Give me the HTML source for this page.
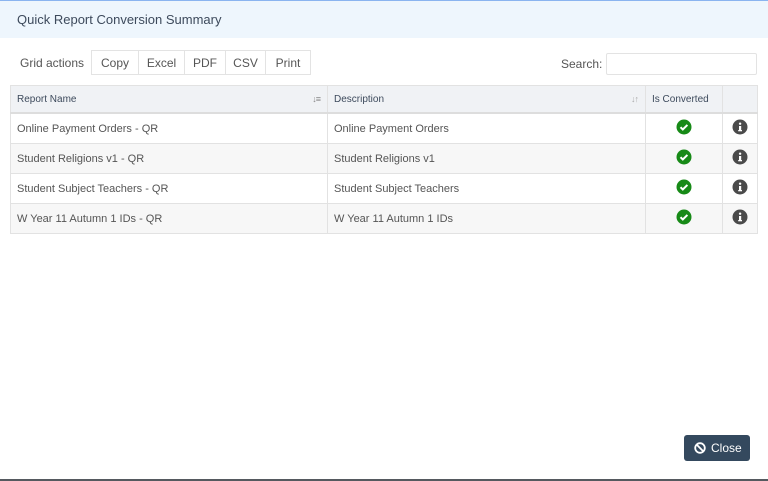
<!DOCTYPE html><html><head><style>
body{margin:0;width:768px;height:481px;background:#fff;font-family:"Liberation Sans",sans-serif;position:relative;overflow:hidden;color:#555}
.hd{position:absolute;left:0;top:0;width:768px;height:38px;background:#eef6fd;border-top:1px solid #8ab4f0;box-sizing:border-box}
.hd span{position:absolute;left:17px;top:11px;font-size:13px;color:#3d4a5c}
.ga{position:absolute;left:20px;top:56px;font-size:12px;color:#555}
.btns{position:absolute;left:91px;top:50px;height:25px;display:flex;border:1px solid #e3e3e3;box-sizing:border-box}
.btns div{border-right:1px solid #e3e3e3;font-size:12px;color:#555;line-height:25px;text-align:center;box-sizing:border-box}
.btns div:last-child{border-right:none}
.sl{position:absolute;left:561px;top:57px;font-size:12px;color:#555}
.si{position:absolute;left:606px;top:53px;width:151px;height:22px;border:1px solid #e3e3e3;box-sizing:border-box;border-radius:2px}
table{position:absolute;left:10px;top:85px;width:747px;border-collapse:collapse;font-size:11px;table-layout:fixed}
td,th{border:1px solid #e2e2e2;padding:0 6px;text-align:left;color:#555;font-weight:normal}
th{height:25px;background:#f0f2f5;font-size:10px;color:#3d4a5c;border-bottom:2px solid #ddd;position:relative;padding-top:1px}
td{height:29px}
tr.s td{background:#f7f7f7}
.ar{position:absolute;right:7px;top:8px;font-size:9px;color:#aaa;letter-spacing:-1px}
.c{text-align:center}
.close{position:absolute;left:684px;top:435px;width:66px;height:26px;background:#34495e;border-radius:3px;color:#fff;font-size:12px;line-height:26px}
.bl{position:absolute;left:0;top:479px;width:768px;height:2px;background:#55595f}
</style></head><body>
<div class="hd"><span>Quick Report Conversion Summary</span></div>
<div class="ga">Grid actions</div>
<div class="btns"><div style="width:47px">Copy</div><div style="width:46px">Excel</div><div style="width:41px">PDF</div><div style="width:40px">CSV</div><div style="width:44px">Print</div></div>
<div class="sl">Search:</div><div class="si"></div>
<table>
<colgroup><col style="width:317px"><col style="width:318px"><col style="width:77px"><col style="width:35px"></colgroup>
<tr><th>Report Name<span class="ar" style="color:#888">↓≡</span></th><th>Description<span class="ar">↓↑</span></th><th>Is Converted</th><th></th></tr>
<tr><td>Online Payment Orders - QR</td><td>Online Payment Orders</td><td class="c"><svg width="16" height="16" viewBox="0 0 16 16"><circle cx="8" cy="8" r="7.5" fill="#178a17"/><path d="M4.5 8.2l2.3 2.3 4.6-4.6" stroke="#fff" stroke-width="2" fill="none"/></svg></td><td class="c"><svg width="16" height="16" viewBox="0 0 16 16"><circle cx="8" cy="8" r="7.5" fill="#4a4a4a"/><rect x="7" y="7" width="2.2" height="5" fill="#fff"/><rect x="6.2" y="11" width="3.8" height="1.3" fill="#fff"/><circle cx="8.1" cy="4.7" r="1.2" fill="#fff"/></svg></td></tr>
<tr class="s"><td>Student Religions v1 - QR</td><td>Student Religions v1</td><td class="c"><svg width="16" height="16" viewBox="0 0 16 16"><circle cx="8" cy="8" r="7.5" fill="#178a17"/><path d="M4.5 8.2l2.3 2.3 4.6-4.6" stroke="#fff" stroke-width="2" fill="none"/></svg></td><td class="c"><svg width="16" height="16" viewBox="0 0 16 16"><circle cx="8" cy="8" r="7.5" fill="#4a4a4a"/><rect x="7" y="7" width="2.2" height="5" fill="#fff"/><rect x="6.2" y="11" width="3.8" height="1.3" fill="#fff"/><circle cx="8.1" cy="4.7" r="1.2" fill="#fff"/></svg></td></tr>
<tr><td>Student Subject Teachers - QR</td><td>Student Subject Teachers</td><td class="c"><svg width="16" height="16" viewBox="0 0 16 16"><circle cx="8" cy="8" r="7.5" fill="#178a17"/><path d="M4.5 8.2l2.3 2.3 4.6-4.6" stroke="#fff" stroke-width="2" fill="none"/></svg></td><td class="c"><svg width="16" height="16" viewBox="0 0 16 16"><circle cx="8" cy="8" r="7.5" fill="#4a4a4a"/><rect x="7" y="7" width="2.2" height="5" fill="#fff"/><rect x="6.2" y="11" width="3.8" height="1.3" fill="#fff"/><circle cx="8.1" cy="4.7" r="1.2" fill="#fff"/></svg></td></tr>
<tr class="s"><td>W Year 11 Autumn 1 IDs - QR</td><td>W Year 11 Autumn 1 IDs</td><td class="c"><svg width="16" height="16" viewBox="0 0 16 16"><circle cx="8" cy="8" r="7.5" fill="#178a17"/><path d="M4.5 8.2l2.3 2.3 4.6-4.6" stroke="#fff" stroke-width="2" fill="none"/></svg></td><td class="c"><svg width="16" height="16" viewBox="0 0 16 16"><circle cx="8" cy="8" r="7.5" fill="#4a4a4a"/><rect x="7" y="7" width="2.2" height="5" fill="#fff"/><rect x="6.2" y="11" width="3.8" height="1.3" fill="#fff"/><circle cx="8.1" cy="4.7" r="1.2" fill="#fff"/></svg></td></tr>
</table>
<div class="close"><svg style="position:absolute;left:10px;top:7px" width="12" height="12" viewBox="0 0 12 12"><circle cx="6" cy="6" r="4.8" stroke="#fff" stroke-width="1.8" fill="none"/><path d="M2.8 2.8l6.4 6.4" stroke="#fff" stroke-width="1.8"/></svg><span style="position:absolute;left:27px">Close</span></div>
<div class="bl"></div>
</body></html>
